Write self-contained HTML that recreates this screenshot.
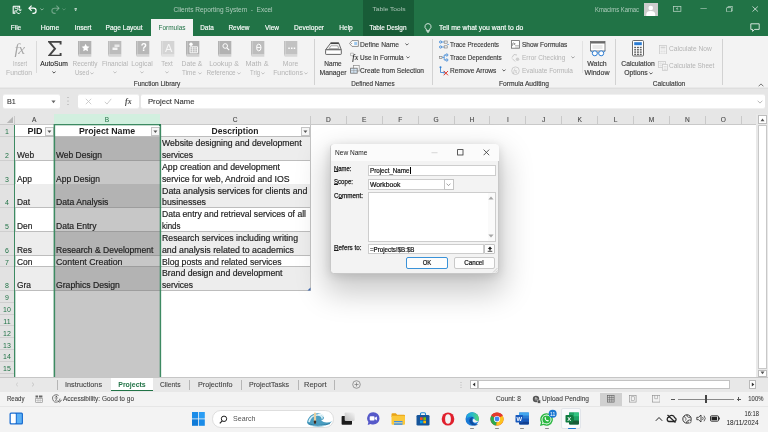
<!DOCTYPE html>
<html lang="en"><head><meta charset="utf-8"><title>Clients Reporting System - Excel</title>
<style>
html,body{margin:0;padding:0;}
body{width:768px;height:432px;overflow:hidden;background:#fff;font-family:"Liberation Sans",sans-serif;position:relative;}
#r{position:absolute;left:0;top:0;width:768px;height:432px;overflow:hidden;will-change:transform;}
#r div,#r svg,#r span.t{position:absolute;box-sizing:border-box;}
span.t{white-space:nowrap;display:block;}
span.t u{text-decoration-thickness:.5px;text-underline-offset:.4px;}
</style></head><body><div id="r">
<!-- window backgrounds -->
<div style="left:0px;top:0px;width:768px;height:36px;background:#217346;"></div>
<div style="left:363px;top:0px;width:51px;height:36px;background:#185c37;"></div>
<div style="left:0px;top:36px;width:768px;height:52px;background:#f3f3f3;"></div>
<div style="left:0px;top:88px;width:768px;height:26px;background:#e6e6e6;"></div>
<div style="left:0px;top:87px;width:768px;height:1px;background:#e9e9e9;"></div>
<div style="left:0px;top:88px;width:768px;height:1px;background:#dedede;"></div>
<div style="left:0px;top:114px;width:768px;height:263px;background:#fff;"></div>
<!-- title bar / quick access toolbar -->
<svg style="left:11.5px;top:5px;" width="10" height="9.5" viewBox="0 0 10 9.5"><path d="M1.200 1.200H7.600V3.400M1.200 1.200V8.300H3.300" fill="none" stroke="#fff" stroke-width="1.100"/><path d="M3 1.200V3.300H6V1.200" fill="none" stroke="#fff" stroke-width=".8"/><path d="M2.800 8.300V5.800H4.200" fill="none" stroke="#fff" stroke-width=".8"/><path d="M8.300 5.200A2.100 2.100 0 1 0 8.500 7.300" fill="none" stroke="#fff" stroke-width=".9"/><path d="M8.900 3.900V5.600H7.200" fill="none" stroke="#fff" stroke-width=".8"/></svg>
<svg style="left:28px;top:5px;" width="10" height="9" viewBox="0 0 10 9"><path d="M1.2 3.2h4.3a2.6 2.6 0 0 1 0 5.2H4.4" fill="none" stroke="#fff" stroke-width="1.2"/><path d="M3.6 .6L1 3.2l2.6 2.6" fill="none" stroke="#fff" stroke-width="1.2"/></svg>
<svg style="left:40px;top:8px;" width="4" height="3" viewBox="0 0 4 3"><path d="M.4 .5L2 2.1 3.6 .5" fill="none" stroke="rgba(255,255,255,.7)" stroke-width=".7"/></svg>
<svg style="left:50px;top:5px;" width="10" height="9" viewBox="0 0 10 9"><path d="M8.8 3.2H4.5a2.6 2.6 0 0 0 0 5.2h1.1" fill="none" stroke="rgba(255,255,255,.35)" stroke-width="1.1"/><path d="M6.4 .6L9 3.2 6.4 5.8" fill="none" stroke="rgba(255,255,255,.35)" stroke-width="1.1"/></svg>
<svg style="left:62px;top:8px;" width="4" height="3" viewBox="0 0 4 3"><path d="M.4 .5L2 2.1 3.6 .5" fill="none" stroke="rgba(255,255,255,.35)" stroke-width=".7"/></svg>
<svg style="left:74.3px;top:7.8px;" width="3.5" height="3.5" viewBox="0 0 3.5 3.5"><path d="M.5 .5h2.400" stroke="#fff" stroke-width=".7"/><path d="M.4 1.500h2.600L1.700 3z" fill="#fff"/></svg>
<span class="t" style="top:5.91px;font-size:6.6px;line-height:8.58px;color:rgba(255,255,255,.62);left:223px;transform:translateX(-50%) scaleX(0.9895);transform-origin:50% 50%;">Clients Reporting System &nbsp;-&nbsp; Excel</span>
<span class="t" style="top:5.17px;font-size:6.2px;line-height:8.06px;color:rgba(255,255,255,.62);left:389px;transform:translateX(-50%) scaleX(1.0699);transform-origin:50% 50%;">Table Tools</span>
<span class="t" style="top:6.14px;font-size:6.4px;line-height:8.32px;color:rgba(255,255,255,.62);left:595.3px;transform:scaleX(0.9176);transform-origin:0 50%;">Kmacims Kamac</span>
<div style="left:644.3px;top:2.8px;width:13.5px;height:13.3px;background:#cdcdcd;"></div>
<svg style="left:644.3px;top:2.8px;" width="13.5" height="13.3" viewBox="0 0 13.5 13.3"><circle cx="6.75" cy="5" r="2.3" fill="#fff"/><path d="M2.3 13.5v-2.2a4.45 3.4 0 0 1 8.9 0v2.2z" fill="#fff"/></svg>
<svg style="left:673px;top:6px;" width="8.5" height="6" viewBox="0 0 8.5 6"><rect x=".5" y=".5" width="7.400" height="4.800" fill="none" stroke="rgba(255,255,255,.72)" stroke-width=".7"/><path d="M4.200 4.300V1.900M3.100 2.900l1.100-1.100 1.100 1.100" fill="none" stroke="rgba(255,255,255,.72)" stroke-width=".6"/></svg>
<svg style="left:700px;top:7.6px;" width="7.5" height="1.5" viewBox="0 0 7.5 1.5"><path d="M.4 .7h6.400" stroke="rgba(255,255,255,.72)" stroke-width=".7"/></svg>
<svg style="left:725.5px;top:5.7px;" width="7.5" height="6.5" viewBox="0 0 7.5 6.5"><rect x=".5" y="1.600" width="5" height="4.300" rx=".6" fill="none" stroke="rgba(255,255,255,.72)" stroke-width=".7"/><path d="M1.800 1.600V1a.5.500 0 0 1 .5-.5h4a.5.500 0 0 1 .5.500v3.300a.5.500 0 0 1-.5.500H5.500" fill="none" stroke="rgba(255,255,255,.72)" stroke-width=".7"/></svg>
<svg style="left:752px;top:5.8px;" width="6.5" height="6" viewBox="0 0 6.5 6"><path d="M.5 .5l5.400 5M5.900 .5L.5 5.500" stroke="rgba(255,255,255,.85)" stroke-width=".8"/></svg>
<!-- ribbon tabs -->
<div style="left:151px;top:18.8px;width:41.5px;height:17.7px;background:#f3f3f3;"></div>
<span class="t" style="top:24.12px;font-size:6.9px;line-height:8.97px;color:#fff;left:16px;transform:translateX(-50%) scaleX(0.9451);transform-origin:50% 50%;-webkit-text-stroke:0.15px #fff;">File</span>
<span class="t" style="top:24.12px;font-size:6.9px;line-height:8.97px;color:#fff;left:50px;transform:translateX(-50%) scaleX(1.0059);transform-origin:50% 50%;-webkit-text-stroke:0.15px #fff;">Home</span>
<span class="t" style="top:24.12px;font-size:6.9px;line-height:8.97px;color:#fff;left:82.7px;transform:translateX(-50%) scaleX(0.9864);transform-origin:50% 50%;-webkit-text-stroke:0.15px #fff;">Insert</span>
<span class="t" style="top:24.12px;font-size:6.9px;line-height:8.97px;color:#fff;left:124.3px;transform:translateX(-50%) scaleX(0.9560);transform-origin:50% 50%;-webkit-text-stroke:0.15px #fff;">Page Layout</span>
<span class="t" style="top:24.12px;font-size:6.9px;line-height:8.97px;color:#fff;left:207.3px;transform:translateX(-50%) scaleX(0.9270);transform-origin:50% 50%;-webkit-text-stroke:0.15px #fff;">Data</span>
<span class="t" style="top:24.12px;font-size:6.9px;line-height:8.97px;color:#fff;left:239.3px;transform:translateX(-50%) scaleX(0.9295);transform-origin:50% 50%;-webkit-text-stroke:0.15px #fff;">Review</span>
<span class="t" style="top:24.12px;font-size:6.9px;line-height:8.97px;color:#fff;left:272px;transform:translateX(-50%) scaleX(0.9451);transform-origin:50% 50%;-webkit-text-stroke:0.15px #fff;">View</span>
<span class="t" style="top:24.12px;font-size:6.9px;line-height:8.97px;color:#fff;left:309.3px;transform:translateX(-50%) scaleX(0.9547);transform-origin:50% 50%;-webkit-text-stroke:0.15px #fff;">Developer</span>
<span class="t" style="top:24.12px;font-size:6.9px;line-height:8.97px;color:#fff;left:346.3px;transform:translateX(-50%) scaleX(0.9526);transform-origin:50% 50%;-webkit-text-stroke:0.15px #fff;">Help</span>
<span class="t" style="top:24.12px;font-size:6.9px;line-height:8.97px;color:#fff;left:388.3px;transform:translateX(-50%) scaleX(0.9286);transform-origin:50% 50%;-webkit-text-stroke:0.15px #fff;">Table Design</span>
<span class="t" style="top:24.12px;font-size:6.9px;line-height:8.97px;color:#217346;left:171.7px;transform:translateX(-50%) scaleX(0.9402);transform-origin:50% 50%;">Formulas</span>
<svg style="left:423.5px;top:22.5px;" width="8" height="10.5" viewBox="0 0 8 10.5"><path d="M4 .6a3 3 0 0 0-1.7 5.5v1.3h3.4V6.100a3 3 0 0 0-1.7-5.500z" fill="none" stroke="#fff" stroke-width=".8"/><path d="M2.6 8.500h2.800M3 9.800h2" stroke="#fff" stroke-width=".7"/></svg>
<span class="t" style="top:24.12px;font-size:6.9px;line-height:8.97px;color:#fff;left:438.7px;transform:scaleX(0.9914);transform-origin:0 50%;-webkit-text-stroke:0.15px #fff;">Tell me what you want to do</span>
<svg style="left:750px;top:22.5px;" width="10" height="9.5" viewBox="0 0 10 9.5"><path d="M.8 .8h8.400v5.600H4.600L2.600 8.400V6.400H.8z" fill="none" stroke="#fff" stroke-width=".8"/></svg>
<!-- ribbon: Formulas tab -->
<span class="t" style="top:38.72px;font-size:15.5px;line-height:20.15px;color:#a6a6a6;font-family:'Liberation Serif',serif;left:19.5px;transform:translateX(-50%);font-style:italic;letter-spacing:-.5px;">fx</span>
<span class="t" style="top:59.78px;font-size:6.8px;line-height:8.84px;color:#b4b4b4;left:20px;transform:translateX(-50%) scaleX(0.8235);transform-origin:50% 50%;">Insert</span>
<span class="t" style="top:69.18px;font-size:6.8px;line-height:8.84px;color:#b4b4b4;left:18.8px;transform:translateX(-50%) scaleX(0.9970);transform-origin:50% 50%;">Function</span>
<div style="left:36px;top:41px;width:1px;height:32px;background:#dadada;"></div>
<svg style="left:48px;top:40.5px;" width="14" height="15.5" viewBox="0 0 14 15.5"><path d="M12.600 3.400V.9H1.200L7 7.700 1.200 14.600H12.600V12" fill="none" stroke="#444" stroke-width="1.900"/></svg>
<span class="t" style="top:59.78px;font-size:6.8px;line-height:8.84px;color:#1e1e1e;left:54px;transform:translateX(-50%) scaleX(0.9904);transform-origin:50% 50%;-webkit-text-stroke:0.1px #1e1e1e;">AutoSum</span>
<svg style="left:52px;top:70.5px;" width="4" height="3" viewBox="0 0 4 3"><path d="M.4 .5L2 2.1 3.600 .5" fill="none" stroke="#262626" stroke-width=".8"/></svg>
<svg style="left:78px;top:41px;" width="14" height="16.5" viewBox="0 0 14 16.5"><rect x="0" y="0" width="13.300" height="13.400" fill="#b2b2b2"/><rect x="1.300" y="0" width=".5" height="13.400" fill="#fff" opacity=".45"/><path d="M1.500 13.400H13.300v2.400H1.500a1.200 1.200 0 0 1 0-2.400z" fill="#b2b2b2" opacity=".55"/><path d="M0 0h.6v14.600H0z" fill="#b2b2b2"/><path d="M7.600 2.800l1.200 2.500 2.700.4-2 1.900.5 2.700-2.400-1.300-2.400 1.300.5-2.700-2-1.900 2.700-.4z" fill="#fff"/></svg>
<span class="t" style="top:59.78px;font-size:6.8px;line-height:8.84px;color:#b4b4b4;left:84.5px;transform:translateX(-50%) scaleX(0.9451);transform-origin:50% 50%;">Recently</span>
<span class="t" style="top:69.18px;font-size:6.8px;line-height:8.84px;color:#b4b4b4;left:81.5px;transform:translateX(-50%) scaleX(0.8819);transform-origin:50% 50%;">Used</span>
<svg style="left:90px;top:71.5px;" width="4" height="3" viewBox="0 0 4 3"><path d="M.4 .5L2 2.1 3.600 .5" fill="none" stroke="#b4b4b4" stroke-width=".8"/></svg>
<svg style="left:108px;top:41px;" width="14" height="16.5" viewBox="0 0 14 16.5"><rect x="0" y="0" width="13.300" height="13.400" fill="#bcbcbc"/><rect x="1.300" y="0" width=".5" height="13.400" fill="#fff" opacity=".45"/><path d="M1.500 13.400H13.300v2.400H1.500a1.200 1.200 0 0 1 0-2.400z" fill="#bcbcbc" opacity=".55"/><path d="M0 0h.6v14.600H0z" fill="#bcbcbc"/><rect x="6.500" y="3.500" width="5" height="2.500" fill="#e9e9e9"/><rect x="4.500" y="6.500" width="5" height="2.500" fill="#f4f4f4"/></svg>
<span class="t" style="top:59.78px;font-size:6.8px;line-height:8.84px;color:#b4b4b4;left:114.5px;transform:translateX(-50%) scaleX(0.9558);transform-origin:50% 50%;">Financial</span>
<svg style="left:112.5px;top:70.5px;" width="4" height="3" viewBox="0 0 4 3"><path d="M.4 .5L2 2.1 3.600 .5" fill="none" stroke="#b4b4b4" stroke-width=".8"/></svg>
<svg style="left:135.5px;top:41px;" width="14" height="16.5" viewBox="0 0 14 16.5"><rect x="0" y="0" width="13.300" height="13.400" fill="#b8b8b8"/><rect x="1.300" y="0" width=".5" height="13.400" fill="#fff" opacity=".45"/><path d="M1.500 13.400H13.300v2.400H1.500a1.200 1.200 0 0 1 0-2.400z" fill="#b8b8b8" opacity=".55"/><path d="M0 0h.6v14.600H0z" fill="#b8b8b8"/><text x="7.800" y="10.200" font-size="10" font-family="Liberation Sans,sans-serif" font-weight="700" fill="#fff" text-anchor="middle">?</text></svg>
<span class="t" style="top:59.78px;font-size:6.8px;line-height:8.84px;color:#b4b4b4;left:142.3px;transform:translateX(-50%) scaleX(0.9932);transform-origin:50% 50%;">Logical</span>
<svg style="left:140.3px;top:70.5px;" width="4" height="3" viewBox="0 0 4 3"><path d="M.4 .5L2 2.1 3.600 .5" fill="none" stroke="#b4b4b4" stroke-width=".8"/></svg>
<svg style="left:161px;top:41px;" width="14" height="16.5" viewBox="0 0 14 16.5"><rect x="0" y="0" width="13.300" height="13.400" fill="#d4d4d4"/><rect x="1.300" y="0" width=".5" height="13.400" fill="#fff" opacity=".45"/><path d="M1.500 13.400H13.300v2.400H1.500a1.200 1.200 0 0 1 0-2.400z" fill="#d4d4d4" opacity=".55"/><path d="M0 0h.6v14.600H0z" fill="#d4d4d4"/><text x="7.600" y="11" font-size="11" font-family="Liberation Sans,sans-serif" fill="#f6f6f6" text-anchor="middle">A</text></svg>
<span class="t" style="top:59.78px;font-size:6.8px;line-height:8.84px;color:#b4b4b4;left:167.2px;transform:translateX(-50%) scaleX(0.9223);transform-origin:50% 50%;">Text</span>
<svg style="left:165.2px;top:70.5px;" width="4" height="3" viewBox="0 0 4 3"><path d="M.4 .5L2 2.1 3.600 .5" fill="none" stroke="#b4b4b4" stroke-width=".8"/></svg>
<svg style="left:185.5px;top:41px;" width="14" height="16.5" viewBox="0 0 14 16.5"><rect x="0" y="0" width="13.300" height="13.400" fill="#b2b2b2"/><rect x="1.300" y="0" width=".5" height="13.400" fill="#fff" opacity=".45"/><path d="M1.500 13.400H13.300v2.400H1.500a1.200 1.200 0 0 1 0-2.400z" fill="#b2b2b2" opacity=".55"/><path d="M0 0h.6v14.600H0z" fill="#b2b2b2"/><circle cx="5" cy="3.200" r="1.700" fill="#fff"/><path d="M4 5.800h7.500v6H4z" fill="none" stroke="#fff" stroke-width=".9"/><path d="M4 7.800h7.500M4 9.800h7.500M6.500 5.800v6M9 5.800v6" stroke="#fff" stroke-width=".6"/></svg>
<span class="t" style="top:59.78px;font-size:6.8px;line-height:8.84px;color:#b4b4b4;left:192px;transform:translateX(-50%) scaleX(1.0009);transform-origin:50% 50%;">Date &amp;</span>
<span class="t" style="top:69.18px;font-size:6.8px;line-height:8.84px;color:#b4b4b4;left:189px;transform:translateX(-50%) scaleX(0.9287);transform-origin:50% 50%;">Time</span>
<svg style="left:197.5px;top:71.5px;" width="4" height="3" viewBox="0 0 4 3"><path d="M.4 .5L2 2.1 3.600 .5" fill="none" stroke="#b4b4b4" stroke-width=".8"/></svg>
<svg style="left:217.5px;top:41px;" width="14" height="16.5" viewBox="0 0 14 16.5"><rect x="0" y="0" width="13.300" height="13.400" fill="#b2b2b2"/><rect x="1.300" y="0" width=".5" height="13.400" fill="#fff" opacity=".45"/><path d="M1.500 13.400H13.300v2.400H1.500a1.200 1.200 0 0 1 0-2.400z" fill="#b2b2b2" opacity=".55"/><path d="M0 0h.6v14.600H0z" fill="#b2b2b2"/><circle cx="7.200" cy="5" r="2.300" fill="none" stroke="#fff" stroke-width="1"/><path d="M8.900 6.800l2.300 2.400" stroke="#fff" stroke-width="1.100"/></svg>
<span class="t" style="top:59.78px;font-size:6.8px;line-height:8.84px;color:#b4b4b4;left:224.2px;transform:translateX(-50%) scaleX(1.0336);transform-origin:50% 50%;">Lookup &amp;</span>
<span class="t" style="top:69.18px;font-size:6.8px;line-height:8.84px;color:#b4b4b4;left:221.2px;transform:translateX(-50%) scaleX(0.9311);transform-origin:50% 50%;">Reference</span>
<svg style="left:237.3px;top:71.5px;" width="4" height="3" viewBox="0 0 4 3"><path d="M.4 .5L2 2.1 3.600 .5" fill="none" stroke="#b4b4b4" stroke-width=".8"/></svg>
<svg style="left:250.5px;top:41px;" width="14" height="16.5" viewBox="0 0 14 16.5"><rect x="0" y="0" width="13.300" height="13.400" fill="#bdbdbd"/><rect x="1.300" y="0" width=".5" height="13.400" fill="#fff" opacity=".45"/><path d="M1.500 13.400H13.300v2.400H1.500a1.200 1.200 0 0 1 0-2.400z" fill="#bdbdbd" opacity=".55"/><path d="M0 0h.6v14.600H0z" fill="#bdbdbd"/><ellipse cx="7.800" cy="6.500" rx="2.200" ry="3.400" fill="none" stroke="#fff" stroke-width="1"/><path d="M5.800 6.500h4" stroke="#fff" stroke-width=".9"/></svg>
<span class="t" style="top:59.78px;font-size:6.8px;line-height:8.84px;color:#b4b4b4;left:257.2px;transform:translateX(-50%) scaleX(1.0767);transform-origin:50% 50%;">Math &amp;</span>
<span class="t" style="top:69.18px;font-size:6.8px;line-height:8.84px;color:#b4b4b4;left:254.5px;transform:translateX(-50%) scaleX(0.8731);transform-origin:50% 50%;">Trig</span>
<svg style="left:261.3px;top:71.5px;" width="4" height="3" viewBox="0 0 4 3"><path d="M.4 .5L2 2.1 3.600 .5" fill="none" stroke="#b4b4b4" stroke-width=".8"/></svg>
<svg style="left:284px;top:41px;" width="14" height="16.5" viewBox="0 0 14 16.5"><rect x="0" y="0" width="13.300" height="13.400" fill="#c2c2c2"/><rect x="1.300" y="0" width=".5" height="13.400" fill="#fff" opacity=".45"/><path d="M1.500 13.400H13.300v2.400H1.500a1.200 1.200 0 0 1 0-2.400z" fill="#c2c2c2" opacity=".55"/><path d="M0 0h.6v14.600H0z" fill="#c2c2c2"/><rect x="4.300" y="6.500" width="1.500" height="1.500" fill="#fff"/><rect x="7" y="6.500" width="1.500" height="1.500" fill="#fff"/><rect x="9.700" y="6.500" width="1.500" height="1.500" fill="#fff"/></svg>
<span class="t" style="top:59.78px;font-size:6.8px;line-height:8.84px;color:#b4b4b4;left:290.5px;transform:translateX(-50%);">More</span>
<span class="t" style="top:69.18px;font-size:6.8px;line-height:8.84px;color:#b4b4b4;left:287.8px;transform:translateX(-50%) scaleX(1.0045);transform-origin:50% 50%;">Functions</span>
<svg style="left:303.8px;top:71.5px;" width="4" height="3" viewBox="0 0 4 3"><path d="M.4 .5L2 2.1 3.600 .5" fill="none" stroke="#b4b4b4" stroke-width=".8"/></svg>
<span class="t" style="top:79.78px;font-size:6.8px;line-height:8.84px;color:#3b3b3b;left:156.7px;transform:translateX(-50%) scaleX(0.9583);transform-origin:50% 50%;-webkit-text-stroke:0.15px #3b3b3b;">Function Library</span>
<div style="left:314px;top:39px;width:1px;height:46px;background:#d2d2d2;"></div>
<svg style="left:324.5px;top:41.5px;" width="17" height="14" viewBox="0 0 17 14"><path d="M.6 7.800L5.600 1.200h8.200L16.300 7.800z" fill="#ededed" stroke="#555" stroke-width=".9" stroke-linejoin="round"/><path d="M5.600 1.200h8.200" stroke="#444" stroke-width="1.600"/><path d="M4 6.600L6 3.800h6.600l1.200 2.800z" fill="#fff" stroke="#777" stroke-width=".6"/><rect x=".6" y="7.800" width="15.700" height="4.600" rx=".6" fill="#fff" stroke="#555" stroke-width=".9"/></svg>
<span class="t" style="top:59.78px;font-size:6.8px;line-height:8.84px;color:#3b3b3b;left:333.3px;transform:translateX(-50%) scaleX(0.9647);transform-origin:50% 50%;-webkit-text-stroke:0.15px #3b3b3b;">Name</span>
<span class="t" style="top:69.18px;font-size:6.8px;line-height:8.84px;color:#3b3b3b;left:333.3px;transform:translateX(-50%) scaleX(1.0064);transform-origin:50% 50%;-webkit-text-stroke:0.15px #3b3b3b;">Manager</span>
<svg style="left:349px;top:40px;" width="10.5" height="7.5" viewBox="0 0 10.5 7.5"><path d="M3 .6H9.400V6.400H3L.6 3.500z" fill="#fdfdfd" stroke="#777" stroke-width=".8" stroke-linejoin="round"/><rect x="5.200" y="2" width="3" height="3" fill="#9ec9ee"/><circle cx="2.700" cy="3.500" r=".5" fill="#777"/></svg>
<span class="t" style="top:40.78px;font-size:6.8px;line-height:8.84px;color:#3b3b3b;left:360.3px;transform:scaleX(0.9831);transform-origin:0 50%;-webkit-text-stroke:0.15px #3b3b3b;">Define Name</span>
<svg style="left:404.5px;top:43.2px;" width="4" height="3" viewBox="0 0 4 3"><path d="M.4 .5L2 2.1 3.600 .5" fill="none" stroke="#3b3b3b" stroke-width=".8"/></svg>
<svg style="left:349.5px;top:52.3px;" width="10" height="10" viewBox="0 0 10 10"><path d="M.5 1.200h2.800l1.200 1.200-1.200 1.200H.5z" fill="#f7f7f7" stroke="#9a9a9a" stroke-width=".6"/><text x="2.200" y="8.200" font-size="7.400" font-style="italic" font-weight="700" font-family="Liberation Serif,serif" fill="#3a3a3a">fx</text></svg>
<span class="t" style="top:53.78px;font-size:6.8px;line-height:8.84px;color:#3b3b3b;left:360.3px;transform:scaleX(0.9481);transform-origin:0 50%;-webkit-text-stroke:0.15px #3b3b3b;">Use in Formula</span>
<svg style="left:405.7px;top:56.2px;" width="4" height="3" viewBox="0 0 4 3"><path d="M.4 .5L2 2.1 3.600 .5" fill="none" stroke="#3b3b3b" stroke-width=".8"/></svg>
<svg style="left:349.5px;top:65.3px;" width="10" height="9" viewBox="0 0 10 9"><rect x="3.600" y=".6" width="5.600" height="5.400" fill="#fafafa" stroke="#8a8a8a" stroke-width=".7"/><rect x=".6" y="3.200" width="6.600" height="5" fill="#d4e6f6" stroke="#6f6f6f" stroke-width=".8"/><path d="M.6 5.600h6.600M3.800 3.200v5" stroke="#8a8a8a" stroke-width=".5"/></svg>
<span class="t" style="top:66.58px;font-size:6.8px;line-height:8.84px;color:#3b3b3b;left:360.3px;transform:scaleX(0.9736);transform-origin:0 50%;-webkit-text-stroke:0.15px #3b3b3b;">Create from Selection</span>
<span class="t" style="top:79.78px;font-size:6.8px;line-height:8.84px;color:#3b3b3b;left:373.3px;transform:translateX(-50%) scaleX(0.9283);transform-origin:50% 50%;-webkit-text-stroke:0.15px #3b3b3b;">Defined Names</span>
<div style="left:432px;top:39px;width:1px;height:46px;background:#d2d2d2;"></div>
<svg style="left:438.5px;top:40px;" width="10" height="9" viewBox="0 0 10 9"><circle cx="1.600" cy="2" r="1.100" fill="none" stroke="#2b7cd3" stroke-width=".8"/><circle cx="1.600" cy="7" r="1.100" fill="none" stroke="#2b7cd3" stroke-width=".8"/><path d="M2.800 2h2.200M2.800 7h2.200" stroke="#2b7cd3" stroke-width=".7"/><rect x="5.200" y="1" width="3" height="2.200" fill="none" stroke="#777" stroke-width=".6"/><rect x="5.200" y="5.800" width="3" height="2.200" fill="none" stroke="#777" stroke-width=".6"/><path d="M8.300 4.500h1.500" stroke="#2b7cd3" stroke-width=".7"/></svg>
<span class="t" style="top:40.78px;font-size:6.8px;line-height:8.84px;color:#3b3b3b;left:450.3px;transform:scaleX(0.9175);transform-origin:0 50%;-webkit-text-stroke:0.15px #3b3b3b;">Trace Precedents</span>
<svg style="left:438.5px;top:53px;" width="10" height="9" viewBox="0 0 10 9"><rect x=".4" y="3.300" width="2.600" height="2.200" fill="none" stroke="#777" stroke-width=".6"/><path d="M3.200 4.400h2M5.200 2v5M5.200 2h1.500M5.200 7h1.500" stroke="#2b7cd3" stroke-width=".7" fill="none"/><circle cx="7.800" cy="2" r="1.100" fill="none" stroke="#2b7cd3" stroke-width=".8"/><circle cx="7.800" cy="7" r="1.100" fill="none" stroke="#2b7cd3" stroke-width=".8"/></svg>
<span class="t" style="top:53.78px;font-size:6.8px;line-height:8.84px;color:#3b3b3b;left:450.3px;transform:scaleX(0.9287);transform-origin:0 50%;-webkit-text-stroke:0.15px #3b3b3b;">Trace Dependents</span>
<svg style="left:438.5px;top:65.5px;" width="10" height="10" viewBox="0 0 10 10"><path d="M1.500 1v5.500h4" fill="none" stroke="#2b7cd3" stroke-width=".8"/><circle cx="1.500" cy="1.300" r="1" fill="#2b7cd3"/><path d="M4.500 5.200l1.600 1.300-1.600 1.300" fill="none" stroke="#2b7cd3" stroke-width=".7"/><path d="M4.800 5l4.200 4.300M9 5L4.800 9.300" stroke="#e03a2e" stroke-width="1"/></svg>
<span class="t" style="top:66.58px;font-size:6.8px;line-height:8.84px;color:#3b3b3b;left:450.3px;transform:scaleX(0.9670);transform-origin:0 50%;-webkit-text-stroke:0.15px #3b3b3b;">Remove Arrows</span>
<svg style="left:502.3px;top:69px;" width="4" height="3" viewBox="0 0 4 3"><path d="M.4 .5L2 2.1 3.600 .5" fill="none" stroke="#3b3b3b" stroke-width=".8"/></svg>
<svg style="left:510.5px;top:40px;" width="9.5" height="9" viewBox="0 0 9.5 9"><rect x=".5" y=".6" width="8" height="7.600" fill="#fff" stroke="#6a6a6a" stroke-width=".8"/><text x="1.300" y="5" font-size="4.500" font-style="italic" font-family="Liberation Serif,serif" fill="#333">fx</text><path d="M4 5.500h4M4 7h4" stroke="#888" stroke-width=".5"/></svg>
<span class="t" style="top:40.78px;font-size:6.8px;line-height:8.84px;color:#3b3b3b;left:522px;transform:scaleX(0.9594);transform-origin:0 50%;-webkit-text-stroke:0.15px #3b3b3b;">Show Formulas</span>
<svg style="left:511px;top:53px;" width="9" height="9" viewBox="0 0 9 9"><path d="M1 4.500l2-3 3 .5M1.200 5.500l3 3" stroke="#c4c4c4" stroke-width=".9" fill="none"/><circle cx="6.500" cy="6.300" r="1.800" fill="#cfcfcf"/></svg>
<span class="t" style="top:53.78px;font-size:6.8px;line-height:8.84px;color:#b4b4b4;left:522px;transform:scaleX(0.9553);transform-origin:0 50%;">Error Checking</span>
<svg style="left:571px;top:56px;" width="4" height="3" viewBox="0 0 4 3"><path d="M.4 .5L2 2.1 3.600 .5" fill="none" stroke="#8a8a8a" stroke-width=".8"/></svg>
<svg style="left:511px;top:65.5px;" width="9" height="9" viewBox="0 0 9 9"><circle cx="4.500" cy="4.700" r="3.800" fill="none" stroke="#c4c4c4" stroke-width=".8"/><text x="2.300" y="6.600" font-size="5.500" font-style="italic" font-family="Liberation Serif,serif" fill="#b8b8b8">fx</text></svg>
<span class="t" style="top:66.58px;font-size:6.8px;line-height:8.84px;color:#b4b4b4;left:522px;transform:scaleX(0.9572);transform-origin:0 50%;">Evaluate Formula</span>
<span class="t" style="top:79.78px;font-size:6.8px;line-height:8.84px;color:#3b3b3b;left:524px;transform:translateX(-50%) scaleX(0.9801);transform-origin:50% 50%;-webkit-text-stroke:0.15px #3b3b3b;">Formula Auditing</span>
<svg style="left:589.5px;top:40.5px;" width="16" height="16" viewBox="0 0 16 16"><rect x=".5" y=".5" width="14.500" height="9.500" fill="#fff" stroke="#6a6a6a" stroke-width=".8"/><rect x=".5" y=".5" width="14.500" height="2" fill="#6a6a6a"/><path d="M2.500 5h10M2.500 7h10" stroke="#bbb" stroke-width=".6"/><circle cx="4.800" cy="12.300" r="2.500" fill="#fff" stroke="#2b7cd3" stroke-width="1"/><circle cx="11.200" cy="12.300" r="2.500" fill="#fff" stroke="#2b7cd3" stroke-width="1"/><path d="M7.300 11.800h1.400M2.300 11.500L1 9.500M13.700 11.500L15 9.500" stroke="#2b7cd3" stroke-width=".8"/></svg>
<span class="t" style="top:59.78px;font-size:6.8px;line-height:8.84px;color:#3b3b3b;left:597px;transform:translateX(-50%) scaleX(1.0255);transform-origin:50% 50%;-webkit-text-stroke:0.15px #3b3b3b;">Watch</span>
<span class="t" style="top:69.18px;font-size:6.8px;line-height:8.84px;color:#3b3b3b;left:597px;transform:translateX(-50%) scaleX(1.0336);transform-origin:50% 50%;-webkit-text-stroke:0.15px #3b3b3b;">Window</span>
<div style="left:581.5px;top:41px;width:0.8px;height:32px;background:#e2e2e2;"></div>
<div style="left:615px;top:39px;width:1px;height:46px;background:#d2d2d2;"></div>
<svg style="left:632px;top:40px;" width="12" height="16.5" viewBox="0 0 12 16.5"><rect x=".5" y=".5" width="11" height="15.500" rx="1" fill="#fff" stroke="#5a5a5a" stroke-width=".9"/><rect x="2.200" y="2.200" width="7.600" height="3" fill="#2b7cd3"/><rect x="2.2" y="6.8" width="1.900" height="1.400" fill="#5f5f5f"/><rect x="5.0" y="6.8" width="1.900" height="1.400" fill="#5f5f5f"/><rect x="7.8" y="6.8" width="1.900" height="1.400" fill="#5f5f5f"/><rect x="2.2" y="9.1" width="1.900" height="1.400" fill="#5f5f5f"/><rect x="5.0" y="9.1" width="1.900" height="1.400" fill="#5f5f5f"/><rect x="7.8" y="9.1" width="1.900" height="1.400" fill="#5f5f5f"/><rect x="2.2" y="11.399999999999999" width="1.900" height="1.400" fill="#5f5f5f"/><rect x="5.0" y="11.399999999999999" width="1.900" height="1.400" fill="#5f5f5f"/><rect x="7.8" y="11.399999999999999" width="1.900" height="1.400" fill="#5f5f5f"/><rect x="2.2" y="13.7" width="1.900" height="1.400" fill="#5f5f5f"/><rect x="5.0" y="13.7" width="1.900" height="1.400" fill="#5f5f5f"/><rect x="7.8" y="13.7" width="1.900" height="1.400" fill="#5f5f5f"/></svg>
<span class="t" style="top:59.78px;font-size:6.8px;line-height:8.84px;color:#3b3b3b;left:638px;transform:translateX(-50%) scaleX(0.9928);transform-origin:50% 50%;-webkit-text-stroke:0.15px #3b3b3b;">Calculation</span>
<span class="t" style="top:69.18px;font-size:6.8px;line-height:8.84px;color:#3b3b3b;left:635.5px;transform:translateX(-50%) scaleX(1.0027);transform-origin:50% 50%;-webkit-text-stroke:0.15px #3b3b3b;">Options</span>
<svg style="left:649px;top:71.5px;" width="4" height="3" viewBox="0 0 4 3"><path d="M.4 .5L2 2.1 3.600 .5" fill="none" stroke="#3b3b3b" stroke-width=".8"/></svg>
<svg style="left:658.5px;top:44.5px;" width="8" height="9.5" viewBox="0 0 8 9.5"><rect x=".4" y=".4" width="7.200" height="8.700" fill="#f7f7f7" stroke="#c6c6c6" stroke-width=".7"/><rect x="1.600" y="1.600" width="4.800" height="1.800" fill="#d2d2d2"/><path d="M1.600 5h4.800M1.600 6.500h4.800M1.600 8h4.800" stroke="#d0d0d0" stroke-width=".7" stroke-dasharray="1.200 .6"/></svg>
<span class="t" style="top:45.38px;font-size:6.8px;line-height:8.84px;color:#b4b4b4;left:669.3px;transform:scaleX(0.9743);transform-origin:0 50%;">Calculate Now</span>
<svg style="left:657.5px;top:61px;" width="10" height="10" viewBox="0 0 10 10"><rect x=".4" y=".4" width="7" height="6" fill="#f7f7f7" stroke="#c6c6c6" stroke-width=".7"/><path d="M.4 2.400h7M.4 4.400h7M2.800 .4v6M5.200 .4v6" stroke="#d6d6d6" stroke-width=".5"/><rect x="4.600" y="3.500" width="5" height="6" fill="#f7f7f7" stroke="#c6c6c6" stroke-width=".7"/><path d="M5.600 5.500h3M5.600 7h3M5.600 8.500h3" stroke="#d0d0d0" stroke-width=".6"/></svg>
<span class="t" style="top:62.38px;font-size:6.8px;line-height:8.84px;color:#b4b4b4;left:669.3px;transform:scaleX(0.9458);transform-origin:0 50%;">Calculate Sheet</span>
<span class="t" style="top:79.78px;font-size:6.8px;line-height:8.84px;color:#3b3b3b;left:668.7px;transform:translateX(-50%) scaleX(0.9661);transform-origin:50% 50%;-webkit-text-stroke:0.15px #3b3b3b;">Calculation</span>
<div style="left:722px;top:39px;width:1px;height:46px;background:#d2d2d2;"></div>
<svg style="left:757.5px;top:82.5px;" width="6" height="4" viewBox="0 0 6 4"><path d="M.6 3.300L3 .9l2.400 2.400" fill="none" stroke="#555" stroke-width=".8"/></svg>
<div style="left:3px;top:94px;width:57px;height:15px;background:#fff;border-radius:2px;background-clip:padding-box;border-top:1px solid rgba(255,255,255,.4);border-bottom:1px solid rgba(255,255,255,.4);"></div>
<span class="t" style="top:96.92px;font-size:7.2px;line-height:9.36px;color:#333;left:6.5px;transform:scaleX(1.0004);transform-origin:0 50%;-webkit-text-stroke:0.1px #333;">B1</span>
<svg style="left:51px;top:99.5px;" width="5" height="4" viewBox="0 0 5 4"><path d="M.4 .6h4.200L2.500 3.200z" fill="#666"/></svg>
<svg style="left:67px;top:96px;" width="2" height="10" viewBox="0 0 2 10"><circle cx="1" cy="1.500" r=".55" fill="#9a9a9a"/><circle cx="1" cy="5" r=".55" fill="#9a9a9a"/><circle cx="1" cy="8.500" r=".55" fill="#9a9a9a"/></svg>
<div style="left:78px;top:94px;width:60.5px;height:15px;background:#fff;border-radius:2px;background-clip:padding-box;border-top:1px solid rgba(255,255,255,.4);border-bottom:1px solid rgba(255,255,255,.4);"></div>
<svg style="left:84.5px;top:98px;" width="7" height="7" viewBox="0 0 7 7"><path d="M.8 .8l5.400 5.400M6.200 .8L.8 6.200" stroke="#c2c2c2" stroke-width=".8"/></svg>
<svg style="left:104px;top:98px;" width="8" height="7" viewBox="0 0 8 7"><path d="M.8 3.800l2.200 2.300L7.200 .9" fill="none" stroke="#c2c2c2" stroke-width=".8"/></svg>
<span class="t" style="top:96.53px;font-size:7.8px;line-height:10.14px;color:#4a4a4a;font-weight:700;font-family:'Liberation Serif',serif;left:128.3px;transform:translateX(-50%);font-style:italic;">fx</span>
<div style="left:141px;top:94px;width:624px;height:15px;background:#fff;border-radius:2px;background-clip:padding-box;border-top:1px solid rgba(255,255,255,.4);border-bottom:1px solid rgba(255,255,255,.4);"></div>
<span class="t" style="top:96.92px;font-size:7.2px;line-height:9.36px;color:#333;left:147.5px;transform:scaleX(1.0678);transform-origin:0 50%;-webkit-text-stroke:0.1px #333;">Project Name</span>
<svg style="left:756.5px;top:99.5px;" width="6" height="4" viewBox="0 0 6 4"><path d="M.6 .7L3 3.100 5.400 .7" fill="none" stroke="#9a9a9a" stroke-width=".7"/></svg>
<!-- worksheet grid -->
<div style="left:0px;top:114px;width:756px;height:11px;background:#e6e6e6;"></div>
<svg style="left:5.5px;top:116px;" width="8" height="8" viewBox="0 0 8 8"><path d="M7 .8V7H.8z" fill="#b7b7b7"/></svg>
<div style="left:54px;top:114px;width:106px;height:11px;background:#d2efdf;border-bottom:1px solid #3d8a62;"></div>
<span class="t" style="top:115.81px;font-size:6.6px;line-height:8.58px;color:#444;left:34.25px;transform:translateX(-50%);-webkit-text-stroke:0.1px #444;">A</span>
<span class="t" style="top:115.81px;font-size:6.6px;line-height:8.58px;color:#217346;left:107.0px;transform:translateX(-50%);">B</span>
<span class="t" style="top:115.81px;font-size:6.6px;line-height:8.58px;color:#444;left:235.25px;transform:translateX(-50%);-webkit-text-stroke:0.1px #444;">C</span>
<div style="left:310.0px;top:115.5px;width:0.8px;height:9.5px;background:#c9c9c9;"></div>
<span class="t" style="top:115.81px;font-size:6.6px;line-height:8.58px;color:#444;left:328.4px;transform:translateX(-50%);-webkit-text-stroke:0.1px #444;">D</span>
<div style="left:345.8px;top:115.5px;width:0.8px;height:9.5px;background:#c9c9c9;"></div>
<span class="t" style="top:115.81px;font-size:6.6px;line-height:8.58px;color:#444;left:364.25px;transform:translateX(-50%);-webkit-text-stroke:0.1px #444;">E</span>
<div style="left:381.7px;top:115.5px;width:0.8px;height:9.5px;background:#c9c9c9;"></div>
<span class="t" style="top:115.81px;font-size:6.6px;line-height:8.58px;color:#444;left:400.15px;transform:translateX(-50%);-webkit-text-stroke:0.1px #444;">F</span>
<div style="left:417.6px;top:115.5px;width:0.8px;height:9.5px;background:#c9c9c9;"></div>
<span class="t" style="top:115.81px;font-size:6.6px;line-height:8.58px;color:#444;left:436.05px;transform:translateX(-50%);-webkit-text-stroke:0.1px #444;">G</span>
<div style="left:453.5px;top:115.5px;width:0.8px;height:9.5px;background:#c9c9c9;"></div>
<span class="t" style="top:115.81px;font-size:6.6px;line-height:8.58px;color:#444;left:471.95px;transform:translateX(-50%);-webkit-text-stroke:0.1px #444;">H</span>
<div style="left:489.4px;top:115.5px;width:0.8px;height:9.5px;background:#c9c9c9;"></div>
<span class="t" style="top:115.81px;font-size:6.6px;line-height:8.58px;color:#444;left:507.84999999999997px;transform:translateX(-50%);-webkit-text-stroke:0.1px #444;">I</span>
<div style="left:525.3px;top:115.5px;width:0.8px;height:9.5px;background:#c9c9c9;"></div>
<span class="t" style="top:115.81px;font-size:6.6px;line-height:8.58px;color:#444;left:543.75px;transform:translateX(-50%);-webkit-text-stroke:0.1px #444;">J</span>
<div style="left:561.2px;top:115.5px;width:0.8px;height:9.5px;background:#c9c9c9;"></div>
<span class="t" style="top:115.81px;font-size:6.6px;line-height:8.58px;color:#444;left:579.6500000000001px;transform:translateX(-50%);-webkit-text-stroke:0.1px #444;">K</span>
<div style="left:597.1px;top:115.5px;width:0.8px;height:9.5px;background:#c9c9c9;"></div>
<span class="t" style="top:115.81px;font-size:6.6px;line-height:8.58px;color:#444;left:615.55px;transform:translateX(-50%);-webkit-text-stroke:0.1px #444;">L</span>
<div style="left:633.0px;top:115.5px;width:0.8px;height:9.5px;background:#c9c9c9;"></div>
<span class="t" style="top:115.81px;font-size:6.6px;line-height:8.58px;color:#444;left:651.45px;transform:translateX(-50%);-webkit-text-stroke:0.1px #444;">M</span>
<div style="left:668.9px;top:115.5px;width:0.8px;height:9.5px;background:#c9c9c9;"></div>
<span class="t" style="top:115.81px;font-size:6.6px;line-height:8.58px;color:#444;left:687.3499999999999px;transform:translateX(-50%);-webkit-text-stroke:0.1px #444;">N</span>
<div style="left:704.8px;top:115.5px;width:0.8px;height:9.5px;background:#c9c9c9;"></div>
<span class="t" style="top:115.81px;font-size:6.6px;line-height:8.58px;color:#444;left:723.25px;transform:translateX(-50%);-webkit-text-stroke:0.1px #444;">O</span>
<div style="left:740.7px;top:115.5px;width:0.8px;height:9.5px;background:#c9c9c9;"></div>
<div style="left:14px;top:115.5px;width:0.8px;height:9.5px;background:#c9c9c9;"></div>
<div style="left:0px;top:124.0px;width:54px;height:0.6px;background:#c9c9c9;"></div>
<div style="left:160px;top:124.0px;width:596px;height:0.6px;background:#c9c9c9;"></div>
<div style="left:0px;top:124.5px;width:14.5px;height:252.5px;background:#e2e2e2;"></div>
<span class="t" style="top:127.35px;font-size:7px;line-height:9.1px;color:#217346;left:7px;transform:translateX(-50%);">1</span>
<div style="left:0px;top:136.0px;width:14px;height:0.6px;background:#cfcfcf;"></div>
<span class="t" style="top:151.15px;font-size:7px;line-height:9.1px;color:#217346;left:7px;transform:translateX(-50%);">2</span>
<div style="left:0px;top:159.79999999999998px;width:14px;height:0.6px;background:#cfcfcf;"></div>
<span class="t" style="top:175.25px;font-size:7px;line-height:9.1px;color:#217346;left:7px;transform:translateX(-50%);">3</span>
<div style="left:0px;top:183.9px;width:14px;height:0.6px;background:#cfcfcf;"></div>
<span class="t" style="top:198.45px;font-size:7px;line-height:9.1px;color:#217346;left:7px;transform:translateX(-50%);">4</span>
<div style="left:0px;top:207.1px;width:14px;height:0.6px;background:#cfcfcf;"></div>
<span class="t" style="top:222.45px;font-size:7px;line-height:9.1px;color:#217346;left:7px;transform:translateX(-50%);">5</span>
<div style="left:0px;top:231.1px;width:14px;height:0.6px;background:#cfcfcf;"></div>
<span class="t" style="top:246.25px;font-size:7px;line-height:9.1px;color:#217346;left:7px;transform:translateX(-50%);">6</span>
<div style="left:0px;top:254.9px;width:14px;height:0.6px;background:#cfcfcf;"></div>
<span class="t" style="top:257.75px;font-size:7px;line-height:9.1px;color:#217346;left:7px;transform:translateX(-50%);">7</span>
<div style="left:0px;top:266.40000000000003px;width:14px;height:0.6px;background:#cfcfcf;"></div>
<span class="t" style="top:281.35px;font-size:7px;line-height:9.1px;color:#217346;left:7px;transform:translateX(-50%);">8</span>
<div style="left:0px;top:290.0px;width:14px;height:0.6px;background:#cfcfcf;"></div>
<span class="t" style="top:293.18px;font-size:7px;line-height:9.1px;color:#217346;left:7px;transform:translateX(-50%);">9</span>
<div style="left:0px;top:301.83px;width:14px;height:0.6px;background:#cfcfcf;"></div>
<span class="t" style="top:305.01px;font-size:7px;line-height:9.1px;color:#217346;left:7px;transform:translateX(-50%);">10</span>
<div style="left:0px;top:313.65999999999997px;width:14px;height:0.6px;background:#cfcfcf;"></div>
<span class="t" style="top:316.84px;font-size:7px;line-height:9.1px;color:#217346;left:7px;transform:translateX(-50%);">11</span>
<div style="left:0px;top:325.48999999999995px;width:14px;height:0.6px;background:#cfcfcf;"></div>
<span class="t" style="top:328.67px;font-size:7px;line-height:9.1px;color:#217346;left:7px;transform:translateX(-50%);">12</span>
<div style="left:0px;top:337.31999999999994px;width:14px;height:0.6px;background:#cfcfcf;"></div>
<span class="t" style="top:340.5px;font-size:7px;line-height:9.1px;color:#217346;left:7px;transform:translateX(-50%);">13</span>
<div style="left:0px;top:349.1499999999999px;width:14px;height:0.6px;background:#cfcfcf;"></div>
<span class="t" style="top:352.33px;font-size:7px;line-height:9.1px;color:#217346;left:7px;transform:translateX(-50%);">14</span>
<div style="left:0px;top:360.9799999999999px;width:14px;height:0.6px;background:#cfcfcf;"></div>
<span class="t" style="top:364.16px;font-size:7px;line-height:9.1px;color:#217346;left:7px;transform:translateX(-50%);">15</span>
<div style="left:0px;top:372.8099999999999px;width:14px;height:0.6px;background:#cfcfcf;"></div>
<div style="left:14px;top:124.5px;width:1px;height:252.5px;background:#3d8a62;"></div>
<div style="left:15px;top:124.5px;width:1px;height:252.5px;background:rgba(61,138,98,.3);"></div>
<div style="left:54px;top:136.5px;width:106px;height:240.5px;background:#c7c7c7;"></div>
<div style="left:14.5px;top:124.5px;width:296px;height:12px;background:#fff;"></div>
<div style="left:14.5px;top:136.4px;width:39.5px;height:23.799999999999983px;background:#ededed;"></div>
<div style="left:54px;top:136.4px;width:106px;height:23.799999999999983px;background:#b3b3b3;"></div>
<div style="left:160px;top:136.4px;width:150.5px;height:23.799999999999983px;background:#ededed;"></div>
<div style="left:14.5px;top:159.7px;width:296px;height:0.7px;background:#bdbdbd;"></div>
<div style="left:54px;top:159.7px;width:106px;height:0.7px;background:#9d9d9d;"></div>
<span class="t" style="top:150.04px;font-size:8.4px;line-height:10.92px;color:#1e1e1e;left:17px;-webkit-text-stroke:0.18px #1e1e1e;">Web</span>
<span class="t" style="top:150.04px;font-size:8.4px;line-height:10.92px;color:#1e1e1e;left:56.3px;transform:scaleX(1.0117);transform-origin:0 50%;-webkit-text-stroke:0.18px #1e1e1e;">Web Design</span>
<span class="t" style="top:137.74px;font-size:8.4px;line-height:10.92px;color:#1e1e1e;left:162.2px;transform:scaleX(1.0350);transform-origin:0 50%;-webkit-text-stroke:0.18px #1e1e1e;">Website designing and development</span>
<span class="t" style="top:150.04px;font-size:8.4px;line-height:10.92px;color:#1e1e1e;left:162.2px;transform:scaleX(1.0092);transform-origin:0 50%;-webkit-text-stroke:0.18px #1e1e1e;">services</span>
<div style="left:14.5px;top:183.8px;width:296px;height:0.7px;background:#bdbdbd;"></div>
<div style="left:54px;top:183.8px;width:106px;height:0.7px;background:#9d9d9d;"></div>
<span class="t" style="top:174.14px;font-size:8.4px;line-height:10.92px;color:#1e1e1e;left:17px;-webkit-text-stroke:0.18px #1e1e1e;">App</span>
<span class="t" style="top:174.14px;font-size:8.4px;line-height:10.92px;color:#1e1e1e;left:56.3px;transform:scaleX(1.0159);transform-origin:0 50%;-webkit-text-stroke:0.18px #1e1e1e;">App Design</span>
<span class="t" style="top:161.54px;font-size:8.4px;line-height:10.92px;color:#1e1e1e;left:162.2px;transform:scaleX(1.0386);transform-origin:0 50%;-webkit-text-stroke:0.18px #1e1e1e;">App creation and development</span>
<span class="t" style="top:174.14px;font-size:8.4px;line-height:10.92px;color:#1e1e1e;left:162.2px;transform:scaleX(1.0413);transform-origin:0 50%;-webkit-text-stroke:0.18px #1e1e1e;">service for web, Android and IOS</span>
<div style="left:14.5px;top:184.3px;width:39.5px;height:23.19999999999999px;background:#ededed;"></div>
<div style="left:54px;top:184.3px;width:106px;height:23.19999999999999px;background:#b3b3b3;"></div>
<div style="left:160px;top:184.3px;width:150.5px;height:23.19999999999999px;background:#ededed;"></div>
<div style="left:14.5px;top:207.0px;width:296px;height:0.7px;background:#bdbdbd;"></div>
<div style="left:54px;top:207.0px;width:106px;height:0.7px;background:#9d9d9d;"></div>
<span class="t" style="top:197.34px;font-size:8.4px;line-height:10.92px;color:#1e1e1e;left:17px;-webkit-text-stroke:0.18px #1e1e1e;">Dat</span>
<span class="t" style="top:197.34px;font-size:8.4px;line-height:10.92px;color:#1e1e1e;left:56.3px;transform:scaleX(1.0325);transform-origin:0 50%;-webkit-text-stroke:0.18px #1e1e1e;">Data Analysis</span>
<span class="t" style="top:185.64px;font-size:8.4px;line-height:10.92px;color:#1e1e1e;left:162.2px;transform:scaleX(1.0552);transform-origin:0 50%;-webkit-text-stroke:0.18px #1e1e1e;">Data analysis services for clients and</span>
<span class="t" style="top:197.34px;font-size:8.4px;line-height:10.92px;color:#1e1e1e;left:162.2px;transform:scaleX(1.0500);transform-origin:0 50%;-webkit-text-stroke:0.18px #1e1e1e;">businesses</span>
<div style="left:14.5px;top:231.0px;width:296px;height:0.7px;background:#bdbdbd;"></div>
<div style="left:54px;top:231.0px;width:106px;height:0.7px;background:#9d9d9d;"></div>
<span class="t" style="top:221.34px;font-size:8.4px;line-height:10.92px;color:#1e1e1e;left:17px;-webkit-text-stroke:0.18px #1e1e1e;">Den</span>
<span class="t" style="top:221.34px;font-size:8.4px;line-height:10.92px;color:#1e1e1e;left:56.3px;transform:scaleX(1.0233);transform-origin:0 50%;-webkit-text-stroke:0.18px #1e1e1e;">Data Entry</span>
<span class="t" style="top:208.84px;font-size:8.4px;line-height:10.92px;color:#1e1e1e;left:162.2px;transform:scaleX(1.0277);transform-origin:0 50%;-webkit-text-stroke:0.18px #1e1e1e;">Data entry and retrieval services of all</span>
<span class="t" style="top:221.34px;font-size:8.4px;line-height:10.92px;color:#1e1e1e;left:162.2px;transform:scaleX(0.9457);transform-origin:0 50%;-webkit-text-stroke:0.18px #1e1e1e;">kinds</span>
<div style="left:14.5px;top:231.5px;width:39.5px;height:23.80000000000001px;background:#ededed;"></div>
<div style="left:54px;top:231.5px;width:106px;height:23.80000000000001px;background:#b3b3b3;"></div>
<div style="left:160px;top:231.5px;width:150.5px;height:23.80000000000001px;background:#ededed;"></div>
<div style="left:14.5px;top:254.8px;width:296px;height:0.7px;background:#bdbdbd;"></div>
<div style="left:54px;top:254.8px;width:106px;height:0.7px;background:#9d9d9d;"></div>
<span class="t" style="top:245.14px;font-size:8.4px;line-height:10.92px;color:#1e1e1e;left:17px;-webkit-text-stroke:0.18px #1e1e1e;">Res</span>
<span class="t" style="top:245.14px;font-size:8.4px;line-height:10.92px;color:#1e1e1e;left:56.3px;transform:scaleX(1.0195);transform-origin:0 50%;-webkit-text-stroke:0.18px #1e1e1e;">Research &amp; Development</span>
<span class="t" style="top:232.84px;font-size:8.4px;line-height:10.92px;color:#1e1e1e;left:162.2px;transform:scaleX(1.0397);transform-origin:0 50%;-webkit-text-stroke:0.18px #1e1e1e;">Research services including writing</span>
<span class="t" style="top:245.14px;font-size:8.4px;line-height:10.92px;color:#1e1e1e;left:162.2px;transform:scaleX(1.0462);transform-origin:0 50%;-webkit-text-stroke:0.18px #1e1e1e;">and analysis related to academics</span>
<div style="left:14.5px;top:266.3px;width:296px;height:0.7px;background:#bdbdbd;"></div>
<div style="left:54px;top:266.3px;width:106px;height:0.7px;background:#9d9d9d;"></div>
<span class="t" style="top:256.64px;font-size:8.4px;line-height:10.92px;color:#1e1e1e;left:17px;-webkit-text-stroke:0.18px #1e1e1e;">Con</span>
<span class="t" style="top:256.64px;font-size:8.4px;line-height:10.92px;color:#1e1e1e;left:56.3px;transform:scaleX(1.0501);transform-origin:0 50%;-webkit-text-stroke:0.18px #1e1e1e;">Content Creation</span>
<span class="t" style="top:256.64px;font-size:8.4px;line-height:10.92px;color:#1e1e1e;left:162.2px;transform:scaleX(1.0267);transform-origin:0 50%;-webkit-text-stroke:0.18px #1e1e1e;">Blog posts and related services</span>
<div style="left:14.5px;top:266.8px;width:39.5px;height:23.599999999999966px;background:#ededed;"></div>
<div style="left:54px;top:266.8px;width:106px;height:23.599999999999966px;background:#b3b3b3;"></div>
<div style="left:160px;top:266.8px;width:150.5px;height:23.599999999999966px;background:#ededed;"></div>
<div style="left:14.5px;top:289.9px;width:296px;height:0.7px;background:#bdbdbd;"></div>
<div style="left:54px;top:289.9px;width:106px;height:0.7px;background:#9d9d9d;"></div>
<span class="t" style="top:280.24px;font-size:8.4px;line-height:10.92px;color:#1e1e1e;left:17px;-webkit-text-stroke:0.18px #1e1e1e;">Gra</span>
<span class="t" style="top:280.24px;font-size:8.4px;line-height:10.92px;color:#1e1e1e;left:56.3px;transform:scaleX(1.0319);transform-origin:0 50%;-webkit-text-stroke:0.18px #1e1e1e;">Graphics Design</span>
<span class="t" style="top:268.14px;font-size:8.4px;line-height:10.92px;color:#1e1e1e;left:162.2px;transform:scaleX(1.0394);transform-origin:0 50%;-webkit-text-stroke:0.18px #1e1e1e;">Brand design and development</span>
<span class="t" style="top:280.24px;font-size:8.4px;line-height:10.92px;color:#1e1e1e;left:162.2px;transform:scaleX(1.0092);transform-origin:0 50%;-webkit-text-stroke:0.18px #1e1e1e;">services</span>
<div style="left:14.5px;top:136px;width:296px;height:0.7px;background:#bdbdbd;"></div>
<div style="left:159.5px;top:124.5px;width:0.7px;height:166px;background:#c4c4c4;"></div>
<div style="left:310px;top:124.5px;width:0.7px;height:166px;background:#c4c4c4;"></div>
<span class="t" style="top:126.08px;font-size:8.5px;line-height:11.05px;color:#1f1f1f;font-weight:700;left:34.5px;transform:translateX(-50%) scaleX(1.0584);transform-origin:50% 50%;">PID</span>
<span class="t" style="top:126.08px;font-size:8.5px;line-height:11.05px;color:#1f1f1f;font-weight:700;left:107.3px;transform:translateX(-50%) scaleX(1.0342);transform-origin:50% 50%;">Project Name</span>
<span class="t" style="top:126.08px;font-size:8.5px;line-height:11.05px;color:#1f1f1f;font-weight:700;left:235px;transform:translateX(-50%) scaleX(1.0050);transform-origin:50% 50%;">Description</span>
<div style="left:45px;top:127px;width:8.5px;height:8.5px;background:#f6f6f6;border:1px solid #c4c4c4;"></div>
<svg style="left:47px;top:130px;" width="5" height="3.5" viewBox="0 0 5 3.5"><path d="M.4 .5h4L2.400 3z" fill="#555"/></svg>
<div style="left:151px;top:127px;width:8.5px;height:8.5px;background:#f6f6f6;border:1px solid #c4c4c4;"></div>
<svg style="left:153px;top:130px;" width="5" height="3.5" viewBox="0 0 5 3.5"><path d="M.4 .5h4L2.400 3z" fill="#555"/></svg>
<div style="left:301px;top:127px;width:8.5px;height:8.5px;background:#f6f6f6;border:1px solid #c4c4c4;"></div>
<svg style="left:303px;top:130px;" width="5" height="3.5" viewBox="0 0 5 3.5"><path d="M.4 .5h4L2.400 3z" fill="#555"/></svg>
<svg style="left:306.5px;top:286.5px;" width="4" height="4" viewBox="0 0 4 4"><path d="M3.500 .5v3H.5z" fill="#3a66b0"/></svg>
<div style="left:53px;top:124px;width:1px;height:253px;background:rgba(61,138,98,.4);"></div>
<div style="left:54px;top:124px;width:1px;height:253px;background:#3d8a62;"></div>
<div style="left:55px;top:125px;width:1px;height:252px;background:rgba(61,138,98,.15);"></div>
<div style="left:159px;top:124px;width:1px;height:253px;background:rgba(61,138,98,.3);"></div>
<div style="left:160px;top:124px;width:1px;height:253px;background:#3d8a62;"></div>
<div style="left:161px;top:125px;width:1px;height:252px;background:rgba(61,138,98,.15);"></div>
<div style="left:54px;top:124px;width:107px;height:1px;background:#3d8a62;"></div>
<div style="left:55px;top:125px;width:105px;height:1px;background:rgba(61,138,98,.3);"></div>
<div style="left:158.7px;top:123.6px;width:2.4px;height:2.4px;background:#2f7d55;"></div>
<div style="left:756px;top:113.5px;width:12px;height:263.5px;background:#e9e9e9;"></div>
<div style="left:758px;top:115px;width:8.5px;height:8.5px;background:#fff;border:.6px solid #bcbcbc;"></div>
<svg style="left:760px;top:117.5px;" width="5" height="4" viewBox="0 0 5 4"><path d="M.5 3.200h4L2.500 .6z" fill="#555"/></svg>
<div style="left:758px;top:124.5px;width:8.5px;height:244px;background:#fff;border:.6px solid #c8c8c8;"></div>
<div style="left:758px;top:369.5px;width:8.5px;height:7px;background:#fff;border:.6px solid #bcbcbc;"></div>
<svg style="left:760px;top:371.3px;" width="5" height="4" viewBox="0 0 5 4"><path d="M.5 .6h4L2.500 3.200z" fill="#555"/></svg>
<!-- New Name dialog -->
<div style="left:330px;top:143.7px;width:169px;height:130.3px;background:#f3f3f3;border-radius:3.500px;box-shadow:0 14px 30px 5px rgba(0,0,0,.21),0 2px 10px rgba(0,0,0,.12);border:.5px solid #c8c8c8;"></div>
<div style="left:330.5px;top:144.2px;width:168px;height:16.5px;background:#fbfbfb;border-radius:3px 3px 0 0;"></div>
<span class="t" style="top:148.62px;font-size:6.9px;line-height:8.97px;color:#222;left:334.5px;transform:scaleX(0.9533);transform-origin:0 50%;">New Name</span>
<svg style="left:430.5px;top:152px;" width="7" height="1.5" viewBox="0 0 7 1.5"><path d="M.5 .7h6" stroke="#c8c8c8" stroke-width=".7"/></svg>
<svg style="left:456.5px;top:148.5px;" width="7" height="7" viewBox="0 0 7 7"><rect x=".6" y=".6" width="5.400" height="5.400" fill="none" stroke="#333" stroke-width=".8"/></svg>
<svg style="left:482.5px;top:148.5px;" width="7" height="7" viewBox="0 0 7 7"><path d="M.6 .6l5.600 5.600M6.200 .6L.6 6.200" stroke="#333" stroke-width=".8"/></svg>
<span class="t" style="top:164.75px;font-size:6.7px;line-height:8.71px;color:#1b1b1b;left:334px;transform:scaleX(0.8875);transform-origin:0 50%;-webkit-text-stroke:0.25px #1b1b1b;"><u>N</u>ame:</span>
<span class="t" style="top:178.45px;font-size:6.7px;line-height:8.71px;color:#1b1b1b;left:334px;transform:scaleX(0.9115);transform-origin:0 50%;-webkit-text-stroke:0.25px #1b1b1b;"><u>S</u>cope:</span>
<span class="t" style="top:192.25px;font-size:6.7px;line-height:8.71px;color:#1b1b1b;left:334px;transform:scaleX(0.9393);transform-origin:0 50%;-webkit-text-stroke:0.25px #1b1b1b;">C<u>o</u>mment:</span>
<span class="t" style="top:243.75px;font-size:6.7px;line-height:8.71px;color:#1b1b1b;left:334px;transform:scaleX(0.9478);transform-origin:0 50%;-webkit-text-stroke:0.25px #1b1b1b;"><u>R</u>efers to:</span>
<div style="left:367.5px;top:165.3px;width:128px;height:10.5px;background:#fff;border:.6px solid #cdcdcd;"></div>
<span class="t" style="top:167.25px;font-size:6.7px;line-height:8.71px;color:#111;left:370px;transform:scaleX(0.9322);transform-origin:0 50%;-webkit-text-stroke:0.2px #111;">Project_Name</span>
<div style="left:409.8px;top:167px;width:0.6px;height:7.3px;background:#000;"></div>
<div style="left:367.5px;top:178.5px;width:86px;height:11px;background:#fff;border:.6px solid #cdcdcd;"></div>
<span class="t" style="top:180.65px;font-size:6.7px;line-height:8.71px;color:#111;left:370px;transform:scaleX(1.0172);transform-origin:0 50%;-webkit-text-stroke:0.2px #111;">Workbook</span>
<div style="left:443.5px;top:178.5px;width:10px;height:11px;background:#fff;border:.6px solid #c4c4c4;"></div>
<svg style="left:446px;top:183px;" width="5" height="3.5" viewBox="0 0 5 3.5"><path d="M.5 .6l2 2 2-2" fill="none" stroke="#777" stroke-width=".7"/></svg>
<div style="left:367.5px;top:192px;width:128px;height:49.5px;background:#fff;border:.6px solid #cdcdcd;"></div>
<div style="left:487.5px;top:192.6px;width:7.4px;height:48.3px;background:#fafafa;"></div>
<svg style="left:488.3px;top:195.8px;" width="6" height="4" viewBox="0 0 6 4"><path d="M.4 3.500h5.200L3 .5z" fill="#a6a6a6"/></svg>
<svg style="left:488.3px;top:234px;" width="6" height="4" viewBox="0 0 6 4"><path d="M.4 .5h5.200L3 3.500z" fill="#a6a6a6"/></svg>
<div style="left:367.5px;top:244px;width:116px;height:10.3px;background:#fff;border:.6px solid #cdcdcd;"></div>
<span class="t" style="top:245.98px;font-size:6.5px;line-height:8.45px;color:#111;left:370px;transform:scaleX(0.9509);transform-origin:0 50%;-webkit-text-stroke:0.2px #111;">=Projects!$B:$B</span>
<div style="left:483.5px;top:244px;width:11.5px;height:10.3px;background:#fdfdfd;border:.6px solid #c4c4c4;border-radius:1px;"></div>
<svg style="left:486.5px;top:246.3px;" width="6" height="6" viewBox="0 0 6 6"><path d="M3 .5L.8 3h1.500v1.500h1.400V3h1.500z" fill="#222"/><path d="M.7 5.300h4.600" stroke="#222" stroke-width=".8"/></svg>
<div style="left:406px;top:257px;width:41.5px;height:11.7px;background:#fdfdfd;border:.9px solid #3a92d8;border-radius:2px;"></div>
<span class="t" style="top:259.41px;font-size:6.6px;line-height:8.58px;color:#111;left:426.7px;transform:translateX(-50%) scaleX(0.8918);transform-origin:50% 50%;-webkit-text-stroke:0.2px #111;">OK</span>
<div style="left:453.5px;top:257px;width:41px;height:11.7px;background:#fdfdfd;border:.6px solid #c9c9c9;border-radius:2px;"></div>
<span class="t" style="top:259.41px;font-size:6.6px;line-height:8.58px;color:#111;left:474px;transform:translateX(-50%) scaleX(0.9498);transform-origin:50% 50%;-webkit-text-stroke:0.2px #111;">Cancel</span>
<svg style="left:492px;top:266.5px;" width="6" height="6" viewBox="0 0 6 6"><path d="M5.500 1L1 5.500M5.500 3.300L3.300 5.500" stroke="#b5b5b5" stroke-width=".6"/></svg>
<!-- sheet tabs, status bar, taskbar -->
<div style="left:0px;top:377px;width:768px;height:15px;background:#e8e8e8;border-top:.7px solid #c6c6c6;"></div>
<svg style="left:15px;top:382px;" width="4" height="5" viewBox="0 0 4 5"><path d="M3 .6L1 2.500l2 1.900" fill="none" stroke="#c6c6c6" stroke-width=".7"/></svg>
<svg style="left:30.5px;top:382px;" width="4" height="5" viewBox="0 0 4 5"><path d="M1 .6l2 1.900-2 1.900" fill="none" stroke="#bcbcbc" stroke-width=".8"/></svg>
<div style="left:57px;top:379.5px;width:0.7px;height:10px;background:#b5b5b5;"></div>
<span class="t" style="top:380.81px;font-size:6.9px;line-height:8.97px;color:#444;left:64.5px;transform:scaleX(1.0501);transform-origin:0 50%;-webkit-text-stroke:0.1px #444;">Instructions</span>
<div style="left:111px;top:377.7px;width:41.5px;height:13.6px;background:#fff;border-bottom:1.500px solid #217346;"></div>
<span class="t" style="top:380.81px;font-size:6.9px;line-height:8.97px;color:#217346;font-weight:700;left:131.7px;transform:translateX(-50%) scaleX(1.0109);transform-origin:50% 50%;">Projects</span>
<span class="t" style="top:380.81px;font-size:6.9px;line-height:8.97px;color:#444;left:160px;transform:scaleX(0.9733);transform-origin:0 50%;-webkit-text-stroke:0.1px #444;">Clients</span>
<div style="left:188.5px;top:379.5px;width:0.7px;height:10px;background:#b5b5b5;"></div>
<span class="t" style="top:380.81px;font-size:6.9px;line-height:8.97px;color:#444;left:197.5px;transform:scaleX(1.0469);transform-origin:0 50%;-webkit-text-stroke:0.1px #444;">ProjectInfo</span>
<div style="left:241px;top:379.5px;width:0.7px;height:10px;background:#b5b5b5;"></div>
<span class="t" style="top:380.81px;font-size:6.9px;line-height:8.97px;color:#444;left:248.5px;transform:scaleX(1.0240);transform-origin:0 50%;-webkit-text-stroke:0.1px #444;">ProjectTasks</span>
<div style="left:297.5px;top:379.5px;width:0.7px;height:10px;background:#b5b5b5;"></div>
<span class="t" style="top:380.81px;font-size:6.9px;line-height:8.97px;color:#444;left:304px;transform:scaleX(1.0876);transform-origin:0 50%;-webkit-text-stroke:0.1px #444;">Report</span>
<div style="left:333.5px;top:379.5px;width:0.7px;height:10px;background:#b5b5b5;"></div>
<svg style="left:352px;top:380px;" width="9" height="9" viewBox="0 0 9 9"><circle cx="4.500" cy="4.500" r="3.800" fill="none" stroke="#777" stroke-width=".7"/><path d="M4.500 2.500v4M2.500 4.500h4" stroke="#777" stroke-width=".7"/></svg>
<svg style="left:460px;top:380.5px;" width="2" height="8" viewBox="0 0 2 8"><circle cx="1" cy="1.500" r=".5" fill="#aaa"/><circle cx="1" cy="4" r=".5" fill="#aaa"/><circle cx="1" cy="6.500" r=".5" fill="#aaa"/></svg>
<div style="left:470px;top:380.3px;width:8px;height:9px;background:#fff;border:.6px solid #b9b9b9;"></div>
<svg style="left:472px;top:382.3px;" width="4" height="5" viewBox="0 0 4 5"><path d="M3.200 .4v4.200L.7 2.500z" fill="#333"/></svg>
<div style="left:478px;top:380.3px;width:251.5px;height:9px;background:#fff;border:.6px solid #c2c2c2;"></div>
<div style="left:748.5px;top:380.3px;width:7.5px;height:9px;background:#fff;border:.6px solid #b9b9b9;"></div>
<svg style="left:750.5px;top:382.3px;" width="4" height="5" viewBox="0 0 4 5"><path d="M.8 .4v4.200l2.500-2.100z" fill="#333"/></svg>
<div style="left:0px;top:392px;width:768px;height:14px;background:#f3f3f3;"></div>
<span class="t" style="top:395.24px;font-size:6.4px;line-height:8.32px;color:#444;left:7px;transform:scaleX(0.9467);transform-origin:0 50%;-webkit-text-stroke:0.1px #444;">Ready</span>
<svg style="left:34.5px;top:395px;" width="8" height="8" viewBox="0 0 8 8"><rect x=".5" y=".5" width="2.600" height="2" fill="#666"/><rect x="4" y=".5" width="3.400" height="2" fill="#666"/><rect x=".7" y="3.500" width="6.600" height="3.800" fill="none" stroke="#888" stroke-width=".6"/><path d="M.7 5.400h6.600M3 3.500v3.800M5.200 3.500v3.800" stroke="#999" stroke-width=".4"/></svg>
<svg style="left:52px;top:394.3px;" width="10.5" height="9.5" viewBox="0 0 10.5 9.5"><circle cx="4.300" cy="4.400" r="3.700" fill="none" stroke="#555" stroke-width=".7" stroke-dasharray="15 3.500" transform="rotate(70 4.300 4.400)"/><circle cx="4.300" cy="2.500" r=".75" fill="#555"/><path d="M2.500 3.900h3.600M4.300 3.900v1.500M3.200 7l1.100-1.600L5.400 7" fill="none" stroke="#555" stroke-width=".6"/><path d="M6.300 7.200l1.100 1.100L9.600 5.800" fill="none" stroke="#444" stroke-width=".9"/></svg>
<span class="t" style="top:395.24px;font-size:6.4px;line-height:8.32px;color:#444;left:63px;transform:scaleX(1.0145);transform-origin:0 50%;-webkit-text-stroke:0.1px #444;">Accessibility: Good to go</span>
<span class="t" style="top:395.24px;font-size:6.4px;line-height:8.32px;color:#444;left:496px;transform:scaleX(1.0343);transform-origin:0 50%;-webkit-text-stroke:0.1px #444;">Count: 8</span>
<svg style="left:532px;top:394.5px;" width="9" height="9" viewBox="0 0 9 9"><circle cx="4" cy="4" r="3.200" fill="#555"/><path d="M4 5.500V2.600M2.700 3.800L4 2.500l1.300 1.300" stroke="#f3f3f3" stroke-width=".7" fill="none"/><rect x="5.500" y="5" width="3" height="3.200" fill="#555" stroke="#f3f3f3" stroke-width=".4"/></svg>
<span class="t" style="top:395.24px;font-size:6.4px;line-height:8.32px;color:#444;left:541.5px;transform:scaleX(1.0333);transform-origin:0 50%;-webkit-text-stroke:0.1px #444;">Upload Pending</span>
<div style="left:599.5px;top:392.5px;width:22px;height:13px;background:#d0d0d0;"></div>
<svg style="left:607px;top:395px;" width="8" height="8" viewBox="0 0 8 8"><rect x=".4" y=".4" width="6.700" height="6.700" fill="none" stroke="#555" stroke-width=".6"/><path d="M.4 2.600h6.700M.4 4.800h6.700M2.600 .4v6.700M4.800 .4v6.700" stroke="#555" stroke-width=".5"/></svg>
<svg style="left:629px;top:395px;" width="8" height="8" viewBox="0 0 8 8"><rect x=".4" y=".4" width="6.700" height="6.700" fill="none" stroke="#8a8a8a" stroke-width=".6"/><rect x="2.200" y="1.800" width="3.100" height="3.900" fill="none" stroke="#8a8a8a" stroke-width=".5"/></svg>
<svg style="left:651.5px;top:395px;" width="8.5" height="8" viewBox="0 0 8.5 8"><rect x=".4" y=".4" width="7.600" height="6.700" fill="none" stroke="#8a8a8a" stroke-width=".6"/><path d="M2.700 .4v3.300h2.800V.4" fill="none" stroke="#8a8a8a" stroke-width=".5"/></svg>
<div style="left:670.5px;top:398.7px;width:4px;height:0.7px;background:#555;"></div>
<div style="left:678px;top:398.7px;width:56px;height:0.6px;background:#8a8a8a;"></div>
<div style="left:704.8px;top:395.3px;width:1.8px;height:7.4px;background:#444;"></div>
<div style="left:736.5px;top:398.7px;width:4.4px;height:0.7px;background:#555;"></div>
<div style="left:738.35px;top:396.8px;width:0.7px;height:4.4px;background:#555;"></div>
<span class="t" style="top:395.24px;font-size:6.4px;line-height:8.32px;color:#444;right:4.5px;transform:scaleX(0.9169);transform-origin:100% 50%;-webkit-text-stroke:0.1px #444;">100%</span>
<div style="left:0px;top:406px;width:768px;height:26px;background:#f3f3f3;border-top:.6px solid #e6e6e6;"></div>
<svg style="left:9px;top:412px;" width="14.5" height="13" viewBox="0 0 14.5 13"><rect x=".5" y=".5" width="13.500" height="12" rx="1.500" fill="#1d6fd1"/><rect x="1.800" y="1.800" width="5" height="9.400" rx=".6" fill="#fff"/><rect x="7.800" y="1.800" width="5" height="9.400" rx=".6" fill="#5bb0f5"/></svg>
<svg style="left:191.5px;top:411.5px;" width="13" height="14" viewBox="0 0 13 14"><rect x="0" y="0" width="6" height="6.500" fill="#1b8ce8"/><rect x="6.800" y="0" width="6" height="6.500" fill="#2a9df4"/><rect x="0" y="7.300" width="6" height="6.500" fill="#0f7ad8"/><rect x="6.800" y="7.300" width="6" height="6.500" fill="#1b8ce8"/></svg>
<div style="left:212px;top:410px;width:122px;height:17.5px;background:#fff;border-radius:8.750px;border:.6px solid #dedede;"></div>
<svg style="left:218.5px;top:414.5px;" width="9" height="9" viewBox="0 0 9 9"><circle cx="5" cy="3.800" r="2.700" fill="none" stroke="#222" stroke-width="1"/><path d="M3.200 5.800L.8 8.300" stroke="#222" stroke-width="1.100"/></svg>
<span class="t" style="top:413.92px;font-size:7.2px;line-height:9.36px;color:#555;left:232.5px;transform:scaleX(0.9877);transform-origin:0 50%;">Search</span>
<svg style="left:306px;top:411px;" width="27" height="16.5" viewBox="0 0 27 16.5"><path d="M1 11.500C2 6 6 2.200 11.500 2.200c4.500 0 7 2.600 6.300 5.300-.5 1.700-2.600 1.900-3.400.5 2 4 7.600 4.400 11.600 2.300C22.500 15 14 16.600 8 15.300 3.500 14.300 1 13 1 11.500z" fill="#4a9dc0"/><path d="M3 11c1-4 4.300-7 8.500-7 3.300 0 5 1.700 4.500 3.600" fill="none" stroke="#d5eef6" stroke-width="1.700"/><path d="M12 3.500c2.500-.8 5 .3 5.500 2.300" fill="none" stroke="#eaf7fb" stroke-width="1.300"/><path d="M2.500 12.800c4.500 1.800 13 2.200 21.500-.3" fill="none" stroke="#2f7ea4" stroke-width="1.100"/><path d="M4 14.300c4 1 10 1.200 16 0" fill="none" stroke="#b9e0ec" stroke-width=".8"/><rect x="7.900" y="1.500" width="2.200" height="11" rx="1" fill="#e7cfa0"/><rect x="7.900" y="9.500" width="2.200" height="3.200" rx=".8" fill="#3a2e25"/></svg>
<svg style="left:341px;top:412px;" width="14.5" height="13.5" viewBox="0 0 14.5 13.5"><defs><linearGradient id="tvg" x1="0" y1="1" x2="1" y2="0"><stop offset="0" stop-color="#bdbdbd"/><stop offset="1" stop-color="#f4f4f4"/></linearGradient></defs><rect x=".6" y="3.900" width="10.400" height="8.800" rx=".8" fill="#1c1c1c"/><rect x="3.700" y=".5" width="10" height="8.400" rx=".8" fill="url(#tvg)"/></svg>
<svg style="left:366.5px;top:412px;" width="13" height="13.5" viewBox="0 0 13 13.5"><path d="M6.400 .3a6.100 6.100 0 0 1 0 12.200c-1 0-2-.2-2.800-.6L.7 13l.7-2.900A6.100 6.100 0 0 1 6.400 .3z" fill="#5659c9"/><rect x="2.700" y="4.200" width="4.800" height="4.300" rx=".9" fill="#fff"/><path d="M7.800 5.700l2.100-1.300v4l-2.100-1.300z" fill="#fff"/></svg>
<svg style="left:391px;top:411.5px;" width="14.5" height="13.5" viewBox="0 0 14.5 13.5"><path d="M.5 2.200a1 1 0 0 1 1-1h3.300l1.400 1.500h6.800a1 1 0 0 1 1 1V5H.5z" fill="#e8a317"/><rect x=".5" y="3.800" width="13.500" height="9" rx="1" fill="#fbc83a"/><rect x="3" y="9" width="8.500" height="3.800" fill="#3a8ee6"/><rect x="3" y="10.300" width="8.500" height="1" fill="#fbe08a"/></svg>
<svg style="left:416px;top:411.5px;" width="14" height="14" viewBox="0 0 14 14"><path d="M4.500 3V1.800a1 1 0 0 1 1-1h3a1 1 0 0 1 1 1V3" fill="none" stroke="#1f8ad6" stroke-width="1.100"/><rect x=".5" y="3" width="13" height="10.500" rx="1.300" fill="#15549a"/><rect x="4" y="5.300" width="2.700" height="2.700" fill="#f25022"/><rect x="7.300" y="5.300" width="2.700" height="2.700" fill="#7fba00"/><rect x="4" y="8.600" width="2.700" height="2.700" fill="#00a4ef"/><rect x="7.300" y="8.600" width="2.700" height="2.700" fill="#ffb900"/></svg>
<svg style="left:441px;top:411.5px;" width="14" height="14" viewBox="0 0 14 14"><ellipse cx="7" cy="7" rx="6.300" ry="6.600" fill="#e0202d"/><ellipse cx="7" cy="7" rx="2.900" ry="4.700" fill="#f3f3f3"/></svg>
<svg style="left:465px;top:411.5px;" width="14.5" height="14" viewBox="0 0 14.5 14"><defs><linearGradient id="edg" x1="0" y1="0" x2="1" y2="0"><stop offset="0" stop-color="#1f9fe0"/><stop offset=".5" stop-color="#2bbdc4"/><stop offset="1" stop-color="#5bd667"/></linearGradient></defs><circle cx="7.200" cy="7" r="6.700" fill="#1a7ad6"/><path d="M1.700 3.200A6.700 6.700 0 0 1 13.900 7c0 1.600-1.100 2.700-2.800 2.700-1.300 0-2-.7-1.600-1.700C10 6.500 8.600 4.500 6.100 4.500c-1.900 0-3.400 1-4.400 2.600z" fill="url(#edg)"/><path d="M4.300 8.600c0 2.800 2.300 4.800 5.100 4.800 1.500 0 2.800-.5 3.700-1.500-2.600 1.200-6-.6-6-3.800 0-1.400.6-2.400 1.300-3-2.200.1-4.100 1.500-4.100 3.500z" fill="#0d4c9f"/><path d="M7.700 8.500c0-1.100.6-1.800 1.500-2 .5 1.700 1.800 2.700 4 2.500-.6 1.100-1.800 1.700-3.100 1.700-1.400 0-2.400-.9-2.400-2.200z" fill="#f3f3f3"/></svg>
<div style="left:470px;top:428.3px;width:4px;height:1.1px;background:#8a8a8a;border-radius:.6px;"></div>
<svg style="left:490px;top:411.5px;" width="14" height="14" viewBox="0 0 14 14"><circle cx="7" cy="7" r="6.600" fill="#e33b2e"/><path d="M7 7L1.300 3.700A6.600 6.600 0 0 0 6.300 13.600z" fill="#2da94f"/><path d="M7 7l-.7 6.600A6.600 6.600 0 0 0 12.700 3.700z" fill="#fcc31e"/><path d="M1.300 3.700A6.600 6.600 0 0 1 12.700 3.700L7 5z" fill="#e33b2e"/><circle cx="7" cy="7" r="3.100" fill="#fff"/><circle cx="7" cy="7" r="2.400" fill="#4285f4"/></svg>
<div style="left:495px;top:428.3px;width:4px;height:1.1px;background:#8a8a8a;border-radius:.6px;"></div>
<svg style="left:514.5px;top:412px;" width="14.5" height="13" viewBox="0 0 14.5 13"><rect x="4" y=".5" width="10" height="12" rx="1" fill="#2b7cd3"/><rect x="4" y=".5" width="10" height="3" fill="#41a5ee"/><rect x="4" y="6.500" width="10" height="3" fill="#185abd"/><rect x="4" y="9.500" width="10" height="3" rx="1" fill="#103f91"/><rect x=".5" y="3" width="7.500" height="7.500" rx=".8" fill="#185abd"/><text x="4.250" y="8.800" font-size="5.800" font-weight="700" font-family="Liberation Sans,sans-serif" fill="#fff" text-anchor="middle">W</text></svg>
<div style="left:519.5px;top:428.3px;width:4px;height:1.1px;background:#8a8a8a;border-radius:.6px;"></div>
<svg style="left:539px;top:408.5px;" width="19" height="18" viewBox="0 0 19 18"><path d="M7.500 4.200a6.300 6.300 0 1 1-3 11.800L1 17l1-3.400A6.300 6.300 0 0 1 7.500 4.200z" fill="#2bb741"/><path d="M7.500 5.600a4.900 4.900 0 1 1-2.600 9l-2 .6.600-1.900A4.900 4.900 0 0 1 7.500 5.600z" fill="#fff"/><path d="M7.500 6.400a4.100 4.100 0 1 1 0 8.200 4.100 4.100 0 0 1 0-8.200z" fill="#2bb741"/><path d="M5.800 8.300c.3-.4.700-.3.900.1l.3.700c.1.300-.3.500-.2.800.3.600.8 1 1.400 1.300.3.100.5-.3.800-.2l.7.400c.3.200.2.700-.2.900-1.800.8-4.600-2-3.700-4z" fill="#fff"/><circle cx="13.700" cy="4.800" r="4" fill="#1977d2"/><text x="13.700" y="6.800" font-size="5" font-family="Liberation Sans,sans-serif" fill="#fff" text-anchor="middle">11</text></svg>
<div style="left:545px;top:428.3px;width:4px;height:1.1px;background:#8a8a8a;border-radius:.6px;"></div>
<div style="left:560.5px;top:408px;width:20.5px;height:21px;background:#fafbfd;border-radius:2px;border:.5px solid #e2e5ea;"></div>
<svg style="left:564.5px;top:412px;" width="14.5" height="13" viewBox="0 0 14.5 13"><rect x="4" y=".5" width="10" height="12" rx="1" fill="#21a366"/><rect x="4" y=".5" width="5" height="4" fill="#21a366"/><rect x="9" y=".5" width="5" height="4" fill="#33c481"/><rect x="4" y="4.500" width="5" height="4" fill="#107c41"/><rect x="9" y="4.500" width="5" height="4" fill="#21a366"/><rect x="4" y="8.500" width="10" height="4" rx="1" fill="#185c37"/><rect x=".5" y="3" width="7.500" height="7.500" rx=".8" fill="#107c41"/><text x="4.250" y="8.800" font-size="5.800" font-weight="700" font-family="Liberation Sans,sans-serif" fill="#fff" text-anchor="middle">X</text></svg>
<div style="left:567.5px;top:428px;width:8px;height:1.4px;background:#1977d2;border-radius:.7px;"></div>
<svg style="left:655px;top:416px;" width="8" height="6" viewBox="0 0 8 6"><path d="M.8 4.800L4 1.500l3.200 3.300" fill="none" stroke="#222" stroke-width="1"/></svg>
<svg style="left:666px;top:414px;" width="11" height="9" viewBox="0 0 11 9"><path d="M2.800 7.500A2.200 2.200 0 0 1 3 3.200 3 3 0 0 1 8.600 3.600 2 2 0 0 1 8.500 7.500z" fill="none" stroke="#222" stroke-width="1.300"/><path d="M1.500 1l8 7.500" stroke="#222" stroke-width="1.200"/></svg>
<svg style="left:682px;top:413.5px;" width="10" height="10" viewBox="0 0 10 10"><circle cx="5" cy="5" r="4.200" fill="none" stroke="#222" stroke-width=".9"/><path d="M2 2.500c2 1 2.500 2.500 1.500 4M5 .8c-.5 2 1 3 3.500 2.500M4.500 9c0-2 1.500-3 4-2.500" fill="none" stroke="#222" stroke-width=".7"/><circle cx="7.500" cy="7.500" r="1.600" fill="#f3f3f3" stroke="#222" stroke-width=".6"/></svg>
<svg style="left:696px;top:414px;" width="10.5" height="9" viewBox="0 0 10.5 9"><path d="M.8 3.300h1.700L5 1v7L2.500 5.700H.8z" fill="none" stroke="#222" stroke-width=".8" stroke-linejoin="round"/><path d="M6.500 3a2.200 2.200 0 0 1 0 3M8 1.700a4.200 4.200 0 0 1 0 5.600" fill="none" stroke="#222" stroke-width=".7"/></svg>
<svg style="left:709.5px;top:415px;" width="10.5" height="7" viewBox="0 0 10.5 7"><rect x=".5" y=".8" width="8" height="5.400" rx="1" fill="none" stroke="#222" stroke-width=".9"/><rect x="1.500" y="1.800" width="5.600" height="3.400" fill="#222"/><path d="M9.300 2.500v2" stroke="#222" stroke-width="1"/></svg>
<span class="t" style="top:410.24px;font-size:6.4px;line-height:8.32px;color:#222;right:9px;transform:scaleX(0.9062);transform-origin:100% 50%;">16:18</span>
<span class="t" style="top:419.34px;font-size:6.4px;line-height:8.32px;color:#222;right:9px;transform:scaleX(1.0154);transform-origin:100% 50%;">18/11/2024</span>
</div></body></html>
